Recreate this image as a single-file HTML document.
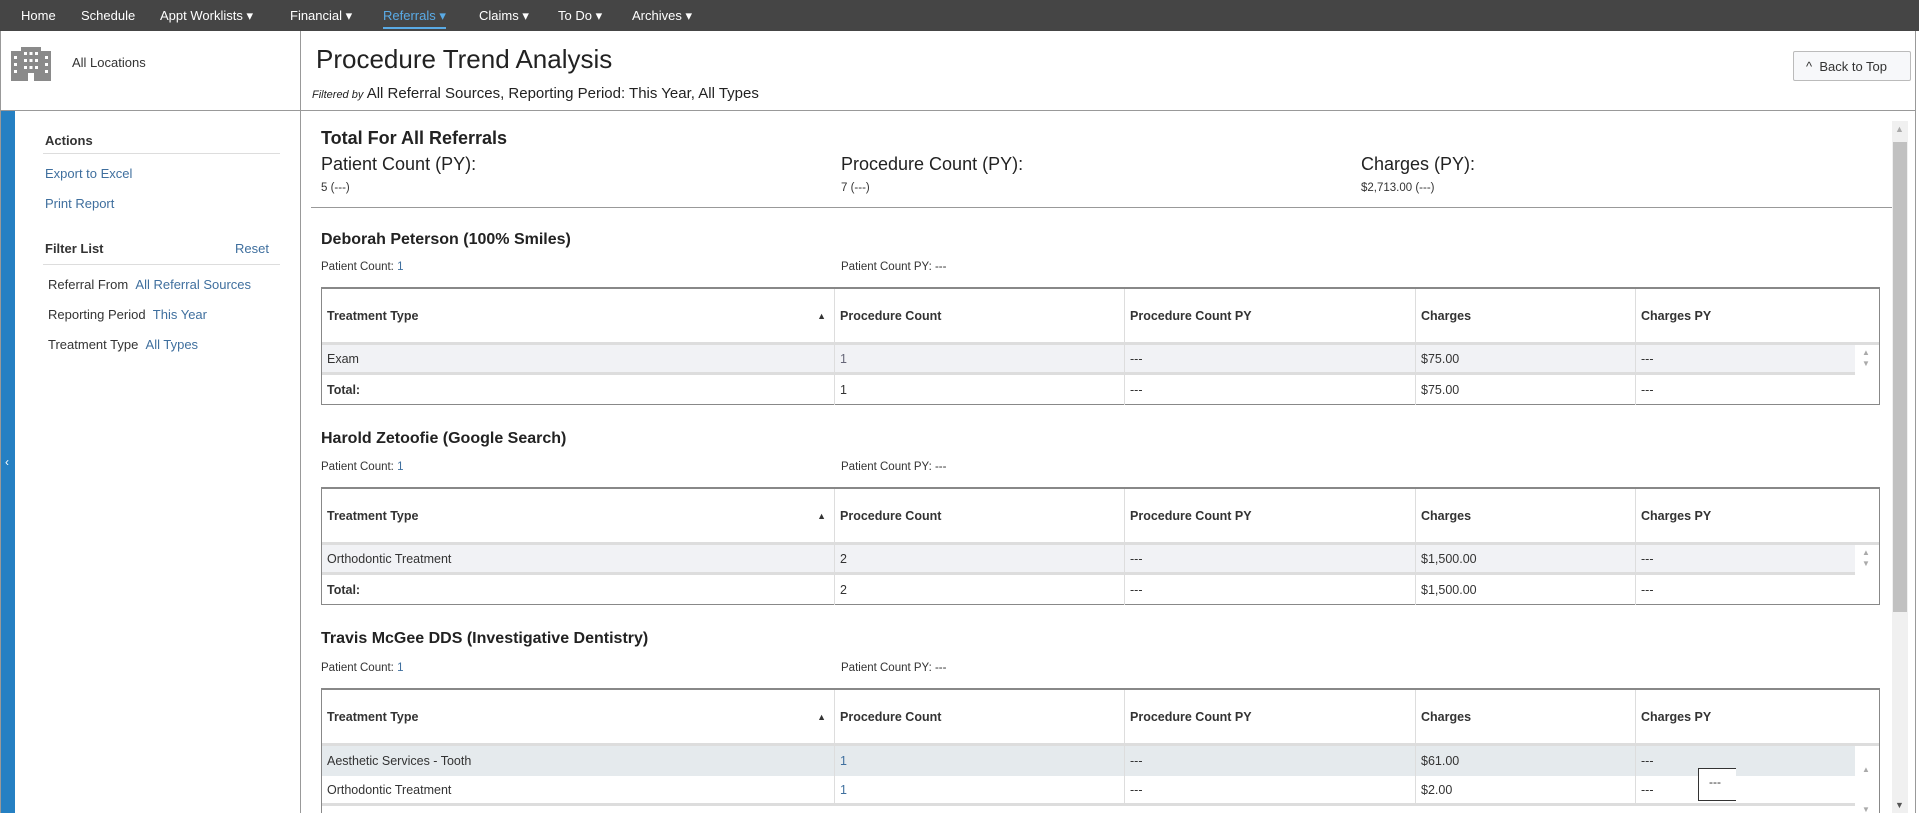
<!DOCTYPE html>
<html><head><meta charset="utf-8"><style>
*{box-sizing:border-box;margin:0;padding:0}
html,body{width:1919px;height:813px;overflow:hidden}
body{background:#fff;font-family:"Liberation Sans",sans-serif;color:#333;position:relative}
#w{position:absolute;left:0;top:0;width:1919px;height:813px;overflow:hidden}
.a{position:absolute;white-space:nowrap}
.nav{position:absolute;left:0;top:0;width:1919px;height:31px;background:#454545}
.nav span{position:absolute;top:8px;color:#fff;font-size:13px}
.lnk{color:#3f6f9e}
.tb{position:absolute;left:321px;width:1559px;border:1px solid #888;border-top:2px solid #888}
.tb .r{position:absolute;left:0;width:100%;font-size:12.5px}
.tb .c{position:absolute;top:0;height:100%;border-left:1px solid #ddd;padding-left:5px;display:flex;align-items:center}
.bold{font-weight:bold}
</style></head><body><div id="w">
<div class="nav">
<span style="left:21px">Home</span><span style="left:81px">Schedule</span><span style="left:160px">Appt Worklists ▾</span><span style="left:290px">Financial ▾</span><span style="left:383px;color:#5aabe6;border-bottom:2px solid #5aabe6;padding-bottom:3px">Referrals ▾</span><span style="left:479px">Claims ▾</span><span style="left:558px">To Do ▾</span><span style="left:632px">Archives ▾</span>
</div>
<div class="a" style="left:0;top:31px;width:1px;height:782px;background:#999"></div>
<div class="a" style="left:1915px;top:31px;width:1px;height:782px;background:#999"></div>
<div class="a" style="left:0;top:110px;width:1916px;height:1px;background:#999"></div>
<div class="a" style="left:300px;top:31px;width:1px;height:782px;background:#999"></div>
<svg class="a" style="left:11px;top:47px" width="40" height="34" viewBox="0 0 40 34"><rect x="0" y="4" width="10" height="30" fill="#8a8a8a"/><rect x="10" y="0" width="20" height="34" fill="#8a8a8a"/><rect x="30" y="4" width="10" height="30" fill="#8a8a8a"/><g fill="#fff"><rect x="3" y="9" width="3" height="3"/><rect x="3" y="16" width="3" height="3"/><rect x="3" y="23" width="3" height="3"/><rect x="13" y="5" width="3" height="3"/><rect x="18.5" y="5" width="3" height="3"/><rect x="24" y="5" width="3" height="3"/><rect x="13" y="12" width="3" height="3"/><rect x="18.5" y="12" width="3" height="3"/><rect x="24" y="12" width="3" height="3"/><rect x="13" y="19" width="3" height="3"/><rect x="18.5" y="19" width="3" height="3"/><rect x="24" y="19" width="3" height="3"/><rect x="17" y="26" width="6" height="8"/><rect x="34" y="9" width="3" height="3"/><rect x="34" y="16" width="3" height="3"/><rect x="34" y="23" width="3" height="3"/></g></svg>
<div class="a" style="left:72px;top:55px;font-size:13px">All Locations</div>
<div class="a" style="left:316px;top:44px;font-size:26px;color:#222">Procedure Trend Analysis</div>
<div class="a" style="left:312px;top:85px;font-size:15px;color:#222"><i style="font-size:11px">Filtered by</i> All Referral Sources, Reporting Period: This Year, All Types</div>
<div class="a" style="left:1793px;top:51px;width:118px;height:30px;border:1px solid #bbb;border-radius:2px;background:#f7f8fa;font-size:13px;padding:7px 0 0 12px">^&nbsp; Back to Top</div>
<div class="a" style="left:1px;top:111px;width:14px;height:702px;background:#2580c3"></div>
<div class="a" style="left:5px;top:455px;color:#fff;font-size:12px">‹</div>
<div class="a" style="left:45px;top:133px;font-size:13px;font-weight:bold;color:#333">Actions</div>
<div class="a" style="left:43px;top:153px;width:237px;height:1px;background:#ddd"></div>
<div class="a lnk" style="left:45px;top:166px;font-size:13px">Export to Excel</div>
<div class="a lnk" style="left:45px;top:196px;font-size:13px">Print Report</div>
<div class="a" style="left:45px;top:241px;font-size:13px;font-weight:bold">Filter List</div>
<div class="a lnk" style="left:235px;top:241px;font-size:13px">Reset</div>
<div class="a" style="left:43px;top:264px;width:237px;height:1px;background:#ddd"></div>
<div class="a" style="left:48px;top:277px;font-size:13px">Referral From <span class="lnk">&nbsp;All Referral Sources</span></div>
<div class="a" style="left:48px;top:307px;font-size:13px">Reporting Period <span class="lnk">&nbsp;This Year</span></div>
<div class="a" style="left:48px;top:337px;font-size:13px">Treatment Type <span class="lnk">&nbsp;All Types</span></div>
<div class="a" style="left:1892px;top:121px;width:16px;height:692px;background:#f0f0f0"></div>
<div class="a" style="left:1893px;top:142px;width:14px;height:470px;background:#c1c1c1"></div>
<div class="a" style="left:1895px;top:124px;font-size:9px;color:#aaa">▲</div>
<div class="a" style="left:1895px;top:800px;font-size:9px;color:#555">▼</div>
<div class="a" style="left:321px;top:128px;font-size:18px;font-weight:bold;color:#222">Total For All Referrals</div>
<div class="a" style="left:321px;top:154px;font-size:18px;color:#222">Patient Count (PY):</div>
<div class="a" style="left:841px;top:154px;font-size:18px;color:#222">Procedure Count (PY):</div>
<div class="a" style="left:1361px;top:154px;font-size:18px;color:#222">Charges (PY):</div>
<div class="a" style="left:321px;top:182px;font-size:11.5px">5 (---)</div>
<div class="a" style="left:841px;top:182px;font-size:11.5px">7 (---)</div>
<div class="a" style="left:1361px;top:182px;font-size:11.5px">$2,713.00 (---)</div>
<div class="a" style="left:311px;top:207px;width:1581px;height:1px;background:#999"></div>

<div class="a" style="left:321px;top:231px;font-size:16px;font-weight:bold;color:#222">Deborah Peterson (100% Smiles)</div>
<div class="a" style="left:321px;top:261px;font-size:11.5px">Patient Count: <span class="lnk">1</span></div>
<div class="a" style="left:841px;top:261px;font-size:11.5px">Patient Count PY: ---</div>
<div class="tb" style="top:287px;height:118px">
 <div class="r bold" style="top:0;height:56px;border-bottom:3px solid #ddd"><div class="c" style="left:0;width:512px;border:0">Treatment Type<span style="position:absolute;right:8px;font-size:9px">▲</span></div><div class="c" style="left:512px">Procedure Count</div><div class="c" style="left:802px">Procedure Count PY</div><div class="c" style="left:1093px">Charges</div><div class="c" style="left:1313px">Charges PY</div></div>
 <div class="r" style="top:56px;height:30px;background:#f1f2f5;border-bottom:3px solid #ddd;width:1533px"><div class="c" style="left:0;border:0">Exam</div><div class="c" style="left:512px;color:#667">1</div><div class="c" style="left:802px">---</div><div class="c" style="left:1093px">$75.00</div><div class="c" style="left:1313px">---</div><div style="position:absolute;left:1540px;top:2px;font-size:8px;color:#aaa;line-height:11px">▲<br>▼</div></div>
 <div class="r" style="top:86px;height:30px"><div class="c bold" style="left:0;border:0">Total:</div><div class="c" style="left:512px">1</div><div class="c" style="left:802px">---</div><div class="c" style="left:1093px">$75.00</div><div class="c" style="left:1313px">---</div></div>
</div>

<div class="a" style="left:321px;top:430px;font-size:16px;font-weight:bold;color:#222">Harold Zetoofie (Google Search)</div>
<div class="a" style="left:321px;top:461px;font-size:11.5px">Patient Count: <span class="lnk">1</span></div>
<div class="a" style="left:841px;top:461px;font-size:11.5px">Patient Count PY: ---</div>
<div class="tb" style="top:487px;height:118px">
 <div class="r bold" style="top:0;height:56px;border-bottom:3px solid #ddd"><div class="c" style="left:0;width:512px;border:0">Treatment Type<span style="position:absolute;right:8px;font-size:9px">▲</span></div><div class="c" style="left:512px">Procedure Count</div><div class="c" style="left:802px">Procedure Count PY</div><div class="c" style="left:1093px">Charges</div><div class="c" style="left:1313px">Charges PY</div></div>
 <div class="r" style="top:56px;height:30px;background:#f1f2f5;border-bottom:3px solid #ddd;width:1533px"><div class="c" style="left:0;border:0">Orthodontic Treatment</div><div class="c" style="left:512px">2</div><div class="c" style="left:802px">---</div><div class="c" style="left:1093px">$1,500.00</div><div class="c" style="left:1313px">---</div><div style="position:absolute;left:1540px;top:2px;font-size:8px;color:#aaa;line-height:11px">▲<br>▼</div></div>
 <div class="r" style="top:86px;height:30px"><div class="c bold" style="left:0;border:0">Total:</div><div class="c" style="left:512px">2</div><div class="c" style="left:802px">---</div><div class="c" style="left:1093px">$1,500.00</div><div class="c" style="left:1313px">---</div></div>
</div>

<div class="a" style="left:321px;top:630px;font-size:16px;font-weight:bold;color:#222">Travis McGee DDS (Investigative Dentistry)</div>
<div class="a" style="left:321px;top:662px;font-size:11.5px">Patient Count: <span class="lnk">1</span></div>
<div class="a" style="left:841px;top:662px;font-size:11.5px">Patient Count PY: ---</div>
<div class="tb" style="top:688px;height:140px">
 <div class="r bold" style="top:0;height:56px;border-bottom:3px solid #ddd"><div class="c" style="left:0;width:512px;border:0">Treatment Type<span style="position:absolute;right:8px;font-size:9px">▲</span></div><div class="c" style="left:512px">Procedure Count</div><div class="c" style="left:802px">Procedure Count PY</div><div class="c" style="left:1093px">Charges</div><div class="c" style="left:1313px">Charges PY</div></div>
 <div class="r" style="top:56px;height:30px;background:#e5eaed;width:1533px"><div class="c" style="left:0;border:0">Aesthetic Services - Tooth</div><div class="c" style="left:512px;color:#3f6f9e">1</div><div class="c" style="left:802px">---</div><div class="c" style="left:1093px">$61.00</div><div class="c" style="left:1313px">---</div></div>
 <div class="r" style="top:86px;height:30px;border-bottom:3px solid #ddd;width:1533px"><div class="c" style="left:0;border:0">Orthodontic Treatment</div><div class="c" style="left:512px;color:#3f6f9e">1</div><div class="c" style="left:802px">---</div><div class="c" style="left:1093px">$2.00</div><div class="c" style="left:1313px">---</div></div>
 <div style="position:absolute;left:1540px;top:60px;font-size:8px;color:#aaa;line-height:40px">▲<br>▼</div>
</div>
<div class="a" style="left:1698px;top:768px;width:38px;height:33px;background:#fff;border:1px solid #333;border-right:0;font-size:12px;padding:6px 0 0 10px">---</div>
</div></body></html>
